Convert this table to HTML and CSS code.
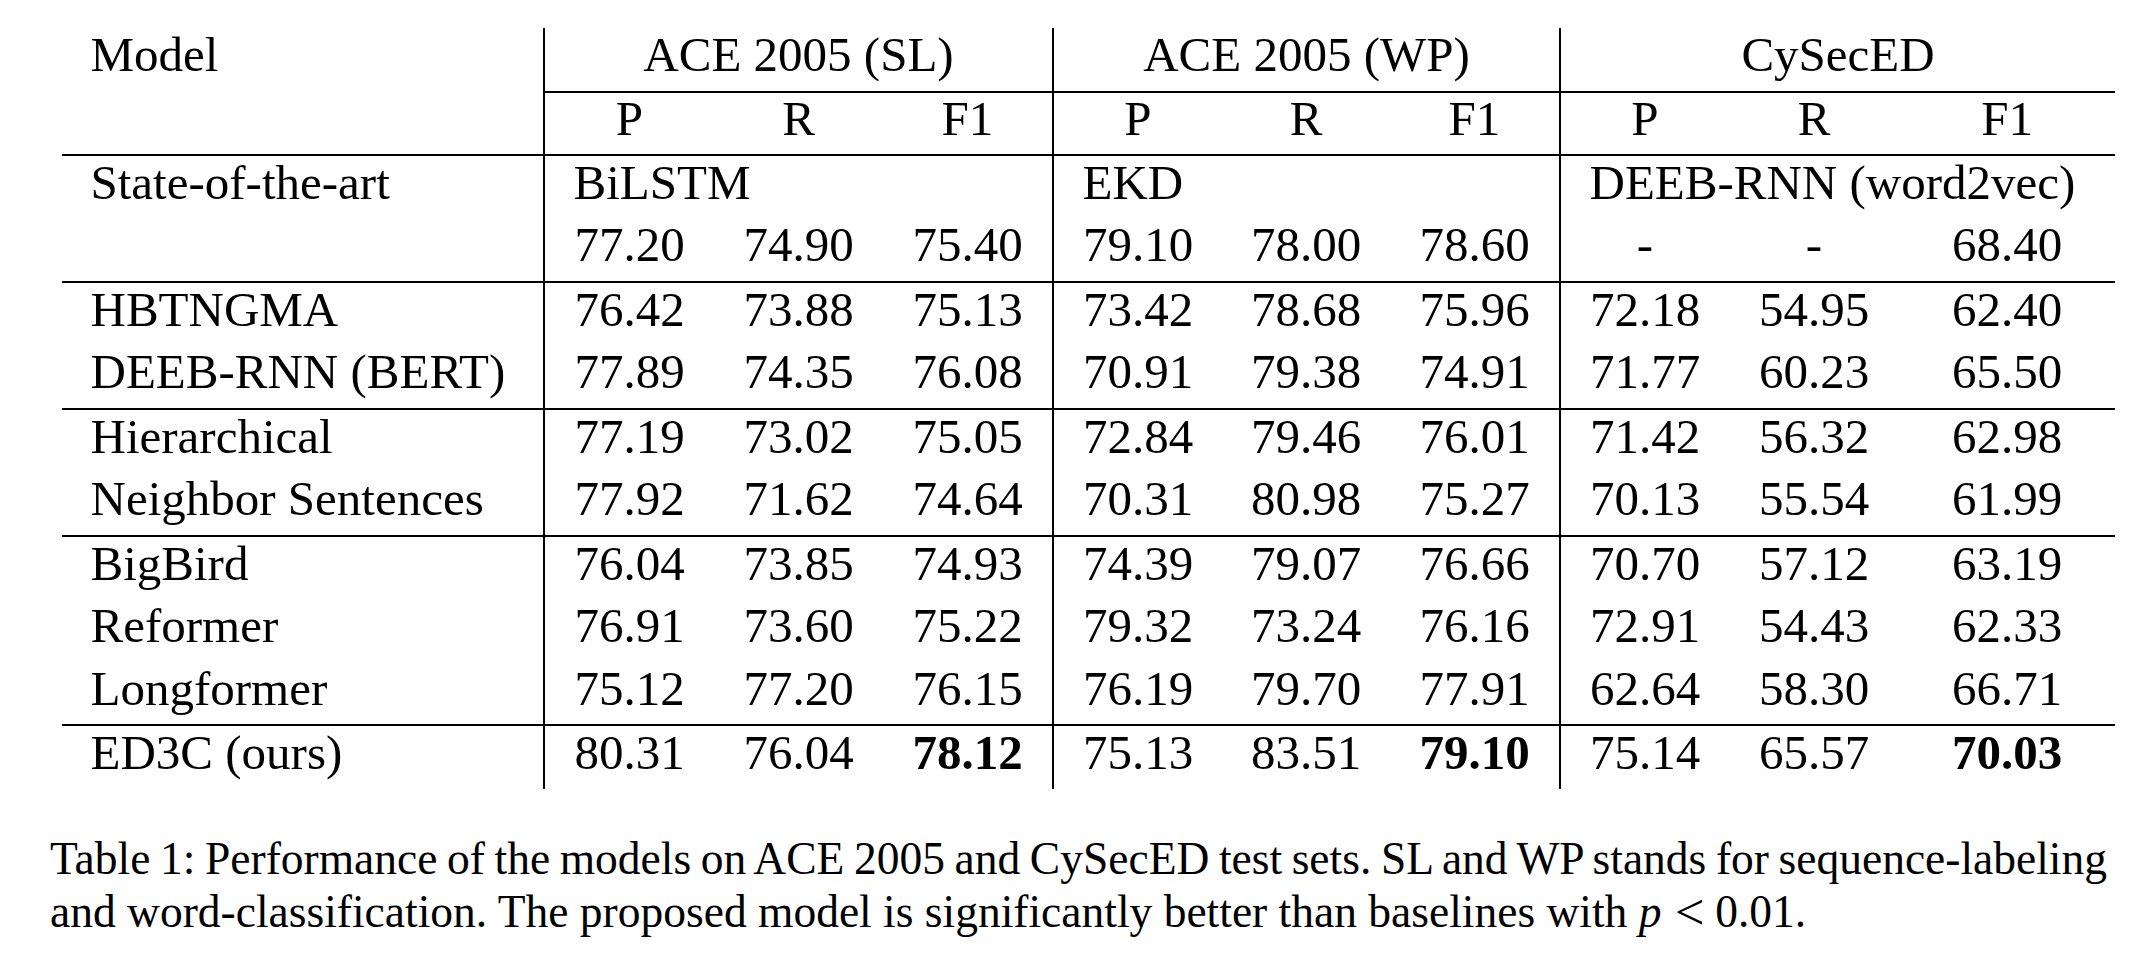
FILE: index.html
```html
<!DOCTYPE html>
<html lang="en">
<head>
<meta charset="utf-8">
<title>Table 1</title>
<link rel="stylesheet" href="styles.css">
</head>
<body>
<table class="results">
  <colgroup>
    <col class="col-model">
    <col class="col-169"><col class="col-169"><col class="col-171">
    <col class="col-168"><col class="col-168"><col class="col-171">
    <col class="col-168"><col class="col-170"><col class="col-216">
  </colgroup>
  <tbody>
    <tr class="head rule">
      <td class="name sep no-rule">Model</td>
      <td class="sep" colspan="3">ACE 2005 (SL)</td>
      <td class="sep" colspan="3">ACE 2005 (WP)</td>
      <td colspan="3">CySecED</td>
    </tr>
    <tr class="sub rule">
      <td class="name sep"></td>
      <td>P</td><td>R</td><td class="sep">F1</td>
      <td>P</td><td>R</td><td class="sep">F1</td>
      <td>P</td><td>R</td><td>F1</td>
    </tr>
    <tr>
      <td class="name sep">State-of-the-art</td>
      <td class="name sep" colspan="3">BiLSTM</td>
      <td class="name sep" colspan="3">EKD</td>
      <td class="name" colspan="3">DEEB-RNN (word2vec)</td>
    </tr>
    <tr class="rule">
      <td class="name sep"></td>
      <td>77.20</td><td>74.90</td><td class="sep">75.40</td>
      <td>79.10</td><td>78.00</td><td class="sep">78.60</td>
      <td>-</td><td>-</td><td>68.40</td>
    </tr>
    <tr>
      <td class="name sep">HBTNGMA</td>
      <td>76.42</td><td>73.88</td><td class="sep">75.13</td>
      <td>73.42</td><td>78.68</td><td class="sep">75.96</td>
      <td>72.18</td><td>54.95</td><td>62.40</td>
    </tr>
    <tr class="rule">
      <td class="name sep">DEEB-RNN (BERT)</td>
      <td>77.89</td><td>74.35</td><td class="sep">76.08</td>
      <td>70.91</td><td>79.38</td><td class="sep">74.91</td>
      <td>71.77</td><td>60.23</td><td>65.50</td>
    </tr>
    <tr>
      <td class="name sep">Hierarchical</td>
      <td>77.19</td><td>73.02</td><td class="sep">75.05</td>
      <td>72.84</td><td>79.46</td><td class="sep">76.01</td>
      <td>71.42</td><td>56.32</td><td>62.98</td>
    </tr>
    <tr class="rule">
      <td class="name sep">Neighbor Sentences</td>
      <td>77.92</td><td>71.62</td><td class="sep">74.64</td>
      <td>70.31</td><td>80.98</td><td class="sep">75.27</td>
      <td>70.13</td><td>55.54</td><td>61.99</td>
    </tr>
    <tr>
      <td class="name sep">BigBird</td>
      <td>76.04</td><td>73.85</td><td class="sep">74.93</td>
      <td>74.39</td><td>79.07</td><td class="sep">76.66</td>
      <td>70.70</td><td>57.12</td><td>63.19</td>
    </tr>
    <tr>
      <td class="name sep">Reformer</td>
      <td>76.91</td><td>73.60</td><td class="sep">75.22</td>
      <td>79.32</td><td>73.24</td><td class="sep">76.16</td>
      <td>72.91</td><td>54.43</td><td>62.33</td>
    </tr>
    <tr class="rule">
      <td class="name sep">Longformer</td>
      <td>75.12</td><td>77.20</td><td class="sep">76.15</td>
      <td>76.19</td><td>79.70</td><td class="sep">77.91</td>
      <td>62.64</td><td>58.30</td><td>66.71</td>
    </tr>
    <tr>
      <td class="name sep">ED3C (ours)</td>
      <td>80.31</td><td>76.04</td><td class="sep best">78.12</td>
      <td>75.13</td><td>83.51</td><td class="sep best">79.10</td>
      <td>75.14</td><td>65.57</td><td class="best">70.03</td>
    </tr>
  </tbody>
</table>
<div class="caption">
  <span class="line first">Table 1: Performance of the models on ACE 2005 and CySecED test sets. SL and WP stands for sequence-labeling</span>
  <span class="line">and word-classification. The proposed model is significantly better than baselines with <span class="math"><i>p</i><span class="rel">&lt;</span>0.01</span>.</span>
</div>
</body>
</html>
```

FILE: styles.css
```css
html, body {
  margin: 0;
  padding: 0;
  background: #ffffff;
}

body {
  font-family: "Liberation Serif", "Times New Roman", serif;
  color: #000000;
  width: 2156px;
}

.results {
  table-layout: fixed;
  border-collapse: separate;
  border-spacing: 0;
  width: 2053px;
  margin: 28px 0 0 62px;
  font-size: 49px;
}

.col-model { width: 483px; }
.col-168 { width: 168px; }
.col-169 { width: 169px; }
.col-170 { width: 170px; }
.col-171 { width: 171px; }
.col-216 { width: 216px; }

.results td {
  padding: 0 28.5px 8.5px;
  line-height: 54px;
  vertical-align: top;
  text-align: center;
  white-space: nowrap;
  overflow: visible;
}

.results td.name {
  text-align: left;
}

.results tr.sub td {
  line-height: 51px;
  padding-bottom: 10px;
}

.results td.sep {
  border-right: 2px solid #000000;
}

.results tr.rule td {
  border-bottom: 2px solid #000000;
}

.results tr.rule td.no-rule {
  border-bottom: none;
}

.results td.best {
  font-weight: bold;
}

.caption {
  margin: 43px 0 0 50px;
  width: 2057px;
  font-size: 45.5px;
  line-height: 53.5px;
}

.caption .line {
  display: block;
  white-space: nowrap;
}

.caption .line.first {
  text-align: justify;
  text-align-last: justify;
  word-spacing: -3px;
}

.math i {
  font-style: italic;
  padding-right: 2px;
}

.math .rel {
  display: inline-block;
  margin: 0 13px;
  transform: scale(1.15, 1.1);
}
```
